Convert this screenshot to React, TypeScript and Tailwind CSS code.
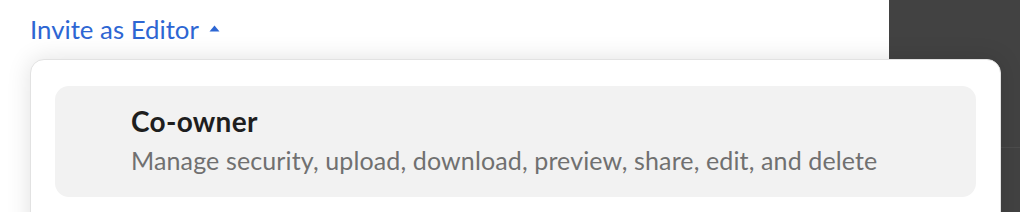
import React from "react";

const App: React.FC = () => {
  return (
    <div
      className="relative flex h-[212px] w-[1020px] overflow-hidden bg-white"
      style={{ fontFamily: "Lato, 'Open Sans', sans-serif" }}
    >
      {/* Left page area */}
      <div className="flex-1 bg-white">
        <button className="flex items-center gap-[10px] pl-[30px] pt-[13px] text-[25.8px] leading-[32px] text-[#2d66d3]">
          <span>Invite as Editor</span>
          <svg width="11" height="7" viewBox="0 0 11 7" className="mt-[-1px]">
            <path d="M5.5 0.5 L10.5 6.5 L0.5 6.5 Z" fill="#2d66d3" />
          </svg>
        </button>
      </div>

      {/* Dark side panel */}
      <div className="w-[131px] bg-[#424242]">
        <div className="h-[148px] border-b border-[#4c4c4c]" />
      </div>

      {/* Dropdown menu */}
      <div className="absolute left-[30px] top-[59px] h-[200px] w-[971px] rounded-[14px] border border-[#e2e2e2] bg-white px-[24px] pt-[26px] shadow-[0_0_24px_rgba(0,0,0,0.12)]">
        <div className="h-[111px] rounded-[14px] bg-[#f2f2f2] pl-[76px] pt-[18px]">
          <div className="text-[28px] font-bold leading-[34px] tracking-[0.3px] text-[#1e1e1e]">
            Co-owner
          </div>
          <div className="mt-[7px] text-[25px] leading-[30px] tracking-[0.13px] text-[#707070]">
            Manage security, upload, download, preview, share, edit, and delete
          </div>
        </div>
      </div>
    </div>
  );
};

export default App;
